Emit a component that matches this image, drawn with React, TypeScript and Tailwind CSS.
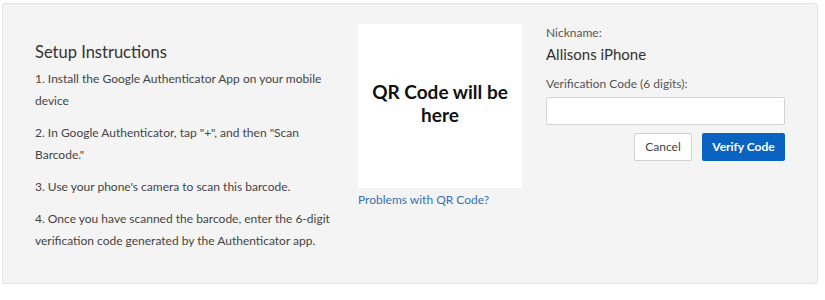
const steps = [
  '1. Install the Google Authenticator App on your mobile device',
  '2. In Google Authenticator, tap "+", and then "Scan Barcode."',
  "3. Use your phone's camera to scan this barcode.",
  '4. Once you have scanned the barcode, enter the 6\u2011digit verification code generated by the Authenticator app.',
];

const App = () => {
  return (
    <div className="h-[300px] w-[825px] bg-white pl-[2px] pt-[3px] font-['Lato',sans-serif]">
      <div className="flex h-[281px] w-[816px] rounded-[3px] border border-[#e3e3e3] bg-[#f4f4f4] pl-[32px] pt-[20px]">
        {/* instructions */}
        <div className="mt-[18px] w-[300px]">
          <h2 className="text-[16.5px] leading-[20px] text-[#333]">Setup Instructions</h2>
          <ol className="mt-[6px] w-[296px] space-y-[10px] text-[12px] leading-[22px] text-[#444]">
            {steps.map((s) => (
              <li key={s}>{s}</li>
            ))}
          </ol>
        </div>

        {/* qr code */}
        <div className="ml-[23px] w-[164px]">
          <div className="flex h-[164px] w-[164px] items-center justify-center bg-white px-[8px] pb-[6px] text-center text-[19px] font-bold leading-[23px] text-[#111]">
            QR Code will be here
          </div>
          <a href="#" className="mt-[4px] block text-[12px] leading-[16px] text-[#3a70b5]">
            Problems with QR Code?
          </a>
        </div>

        {/* verify form */}
        <div className="ml-[24px] w-[239px] pt-[1px]">
          <div className="text-[12px] leading-[16px] text-[#555]">Nickname:</div>
          <div className="mt-[3px] text-[15px] leading-[20px] text-[#333]">Allisons iPhone</div>
          <label className="mt-[12px] block text-[12px] leading-[16px] text-[#555]">Verification Code (6 digits):</label>
          <input
            type="text"
            className="mt-[5px] block h-[28px] w-[239px] rounded-[2px] border border-[#d4d4d4] bg-white px-2 text-[13px] outline-none"
          />
          <div className="mt-[8px] flex justify-end gap-[10px]">
            <button className="h-[28px] w-[58px] rounded-[2px] border border-[#d0d0d0] bg-white text-[12px] text-[#444]">
              Cancel
            </button>
            <button className="h-[28px] w-[83px] rounded-[2px] bg-[#0a63c1] text-[12px] font-bold text-white">
              Verify Code
            </button>
          </div>
        </div>
      </div>
    </div>
  );
};

export default App;
